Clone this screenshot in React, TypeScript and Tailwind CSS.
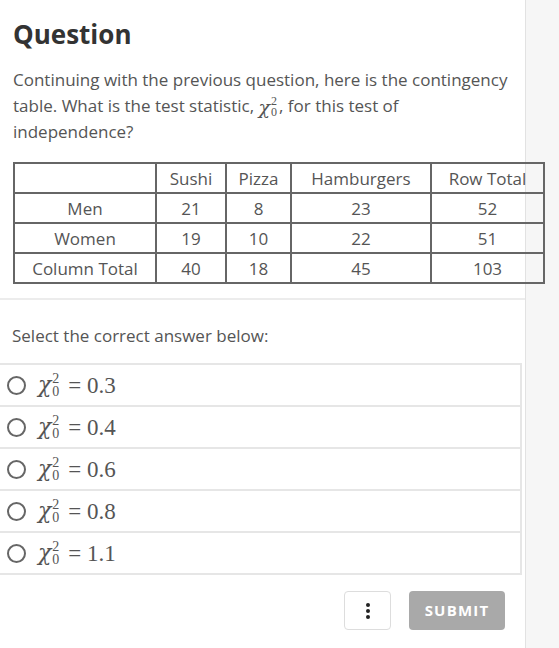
import React from 'react';

const header = ['', 'Sushi', 'Pizza', 'Hamburgers', 'Row Total'];
const rows = [
  ['Men', '21', '8', '23', '52'],
  ['Women', '19', '10', '22', '51'],
  ['Column Total', '40', '18', '45', '103'],
];
const colWidths = ['w-[142px]', 'w-[70px]', 'w-[65px]', 'w-[140px]', 'w-[113px]'];

const answers = ['0.3', '0.4', '0.6', '0.8', '1.1'];

const serif = { fontFamily: '"Liberation Serif", "DejaVu Serif", serif' };
const chiFont = { fontFamily: '"DejaVu Serif", "Liberation Serif", serif' };

function Chi({ big = false }: { big?: boolean }) {
  return (
    <span className={`inline-flex items-center align-middle ${big ? 'text-[22px]' : 'text-[19px]'}`} style={serif}>
      <span className="italic leading-none" style={chiFont}>χ</span>
      <span className={`inline-flex flex-col items-start ml-[1px] ${big ? 'text-[14px] leading-[13px]' : 'text-[12px] leading-[11px]'}`}>
        <span>2</span>
        <span>0</span>
      </span>
    </span>
  );
}

export default function App() {
  return (
    <div className="flex w-[559px] h-[648px] overflow-hidden bg-white" style={{ fontFamily: '"Open Sans", sans-serif' }}>
      {/* Main question panel */}
      <div className="relative z-10 w-[526px] shrink-0 border-r border-[#e2e2e2] bg-white">
        <div className="pl-[13px] pt-[16px]">
          <h1 className="text-[26px] font-bold text-[#333] leading-[36px]">Question</h1>
          <p className="mt-[15px] w-[500px] text-[17px] leading-[26px] text-[#555]">
            Continuing with the previous question, here is the contingency table. What is the test statistic,{' '}
            <span className="inline-block h-[26px] align-top mr-[2px]">
              <Chi />
            </span>
            , for this test of independence?
          </p>

          {/* Contingency table */}
          <table className="mt-[17px] w-[530px] table-fixed border-collapse text-[17px] text-[#555]">
            <tbody>
              <tr>
                {header.map((h, i) => (
                  <td key={i} className={`${colWidths[i]} h-[30px] border-2 border-[#666] text-center p-0 leading-none`}>
                    {h}
                  </td>
                ))}
              </tr>
              {rows.map((r) => (
                <tr key={r[0]}>
                  {r.map((c, i) => (
                    <td key={i} className={`${colWidths[i]} h-[30px] border-2 border-[#666] text-center p-0 leading-none`}>
                      {c}
                    </td>
                  ))}
                </tr>
              ))}
            </tbody>
          </table>
        </div>

        <div className="mt-[14px] h-[2px] bg-[#ececec]" />

        <p className="pl-[12px] pt-[25px] text-[17px] leading-[22px] text-[#555]">Select the correct answer below:</p>

        {/* Answer options */}
        <div className="mt-[16px] mr-[3px] border-t-2 border-[#e6e6e6]">
          {answers.map((a) => (
            <div key={a} className="flex items-center h-[42px] border-b-2 border-r-2 border-[#e6e6e6] pl-[7px]">
              <span className="w-[19px] h-[19px] rounded-full border-2 border-[#666] shrink-0" />
              <span className="ml-[12px] flex items-center text-[#555]">
                <Chi big />
                <span className="ml-[9px] text-[23px] leading-none" style={serif}>
                  = {a}
                </span>
              </span>
            </div>
          ))}
        </div>

        {/* Actions */}
        <div className="flex justify-end gap-[18px] pr-[20px] mt-[16px]">
          <button className="w-[47px] h-[39px] rounded-[4px] border border-[#ddd] bg-white flex items-center justify-center">
            <span className="flex flex-col gap-[2px]">
              <span className="w-[4px] h-[4px] rounded-full bg-[#222]" />
              <span className="w-[4px] h-[4px] rounded-full bg-[#222]" />
              <span className="w-[4px] h-[4px] rounded-full bg-[#222]" />
            </span>
          </button>
          <button className="w-[96px] h-[39px] rounded-[4px] bg-[#a9a9a9] text-white text-[15px] font-bold tracking-[0.08em]">
            SUBMIT
          </button>
        </div>
      </div>

      {/* Side panel */}
      <div className="flex-1 bg-[#f6f6f6]" />
    </div>
  );
}
